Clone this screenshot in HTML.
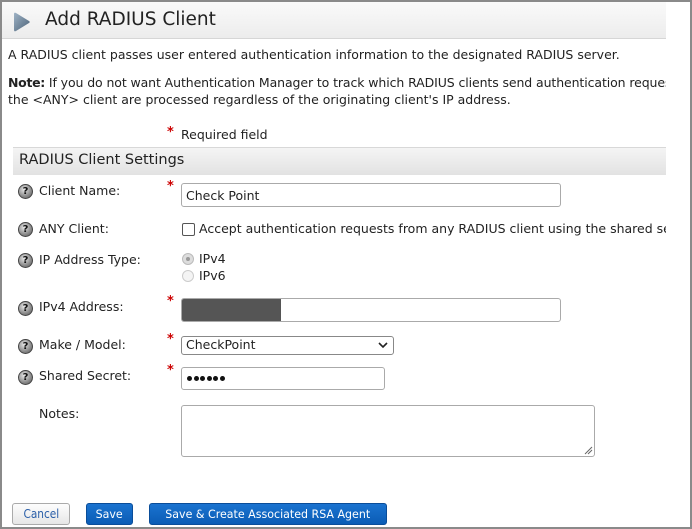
<!DOCTYPE html>
<html><head><meta charset="utf-8"><style>
body{margin:0;width:692px;height:529px;background:#fff;font-family:"DejaVu Sans","Liberation Sans",sans-serif;font-size:12.5px;color:#222;overflow:hidden}
#frame{position:absolute;left:0;top:0;width:688px;height:525px;border:2px solid #8a8a8a;overflow:hidden}
.a{position:absolute;white-space:nowrap}
#clip{position:absolute;left:0;top:0;width:664px;height:525px;overflow:hidden}
.q{position:absolute;left:16px;width:15px;height:15px;border-radius:50%;background:radial-gradient(circle at 40% 35%,#e8e8e8,#8a8a8a 60%,#555);border:1px solid #444;box-sizing:border-box;font:bold 10px "DejaVu Sans",sans-serif;color:#111;text-align:center;line-height:13px}
.st{position:absolute;left:165px;color:#c00;font-size:13px;font-weight:bold}
.inp{position:absolute;border:1px solid #aaa;border-radius:3px;box-sizing:border-box;background:#fff}
.btn{position:absolute;top:501px;height:22px;border-radius:3px;font:11.5px "DejaVu Sans",sans-serif;color:#fff;background:linear-gradient(#1a73d0,#0b5cb5);border:1px solid #0a4d99;box-sizing:border-box;text-align:center;line-height:20px;white-space:nowrap}
.btn span{display:inline-block;transform:scaleX(.96)}
.d{display:inline-block;width:5px;height:5px;border-radius:50%;background:#111;margin-right:1.5px}
</style></head><body>
<div id="frame">
<div id="clip">
<div class="a" style="left:0;top:0;width:665px;height:36px;background:linear-gradient(#fafafa,#ececec);border-bottom:1px solid #d6d6d6"></div>
<svg class="a" style="left:9px;top:10px" width="20" height="20"><defs><linearGradient id="g" x1="0" y1="0" x2="1" y2="1"><stop offset="0" stop-color="#9fb3c6"/><stop offset="1" stop-color="#4c6378"/></linearGradient></defs><path d="M3 2 Q3 0 5 1 L18 9 Q19.5 10 18 11 L5 19 Q3 20 3 18 Z" fill="url(#g)"/></svg>
<div class="a" style="left:43px;top:7px;font-size:18.5px;color:#222">Add RADIUS Client</div>
<div class="a" style="left:6px;top:45px">A RADIUS client passes user entered authentication information to the designated RADIUS server.</div>
<div class="a" style="left:6px;top:73px;letter-spacing:-0.1px"><b style="letter-spacing:-0.3px">Note:</b> If you do not want Authentication Manager to track which RADIUS clients send authentication requests,</div>
<div class="a" style="left:6px;top:90px">the &lt;ANY&gt; client are processed regardless of the originating client's IP address.</div>
<div class="st" style="top:123px">*</div>
<div class="a" style="left:179px;top:125px">Required field</div>
<div class="a" style="left:11px;top:145px;width:660px;height:27px;background:linear-gradient(#f4f4f4,#e2e2e2);border-top:1px solid #d8d8d8"></div>
<div class="a" style="left:17px;top:150px;font-size:14.5px">RADIUS Client Settings</div>

<div class="q" style="top:182px">?</div><div class="a" style="left:37px;top:181px">Client Name:</div><div class="st" style="top:177px">*</div>
<div class="inp" style="left:179px;top:181px;width:380px;height:24px"></div><div class="a" style="left:184px;top:186px">Check Point</div>

<div class="q" style="top:220px">?</div><div class="a" style="left:37px;top:219px">ANY Client:</div>
<div class="inp" style="left:180px;top:221px;width:13px;height:13px;border-color:#555;border-radius:2px"></div>
<div class="a" style="left:197px;top:219px">Accept authentication requests from any RADIUS client using the shared secret</div>

<div class="q" style="top:251px">?</div><div class="a" style="left:37px;top:250px">IP Address Type:</div>
<div class="a" style="left:180px;top:251px;width:12px;height:12px;border-radius:50%;background:#ddd;border:1px solid #bbb;box-sizing:border-box"><div style="margin:3px;width:4px;height:4px;border-radius:50%;background:#999"></div></div>
<div class="a" style="left:197px;top:249px">IPv4</div>
<div class="a" style="left:180px;top:268px;width:12px;height:12px;border-radius:50%;background:#f4f4f4;border:1px solid #ccc;box-sizing:border-box"></div>
<div class="a" style="left:197px;top:266px">IPv6</div>

<div class="q" style="top:299px">?</div><div class="a" style="left:37px;top:297px">IPv4 Address:</div><div class="st" style="top:292px">*</div>
<div class="inp" style="left:179px;top:296px;width:380px;height:24px;overflow:hidden"><div style="width:99px;height:22px;background:#555"></div></div>

<div class="q" style="top:337px">?</div><div class="a" style="left:37px;top:335px">Make / Model:</div><div class="st" style="top:330px">*</div>
<div class="inp" style="left:179px;top:334px;width:213px;height:19px;border-color:#888"></div><div class="a" style="left:184px;top:335px">CheckPoint</div>
<svg class="a" style="left:376px;top:339px" width="10" height="8"><path d="M1 2 L5 6 L9 2" stroke="#222" stroke-width="1.6" fill="none"/></svg>

<div class="q" style="top:368px">?</div><div class="a" style="left:37px;top:366px">Shared Secret:</div><div class="st" style="top:361px">*</div>
<div class="inp" style="left:179px;top:365px;width:204px;height:23px"></div>
<div class="a" style="left:185px;top:374px;height:5px;display:flex;line-height:0">
<span class="d"></span><span class="d"></span><span class="d"></span><span class="d"></span><span class="d"></span><span class="d"></span>
</div>

<div class="a" style="left:37px;top:404px">Notes:</div>
<div class="inp" style="left:179px;top:403px;width:414px;height:52px"></div>
<svg class="a" style="left:582px;top:444px" width="9" height="9"><path d="M1 8 L8 1 M4 8 L8 4" stroke="#666"/></svg>

<div class="a" style="left:10px;top:501px;width:58px;height:22px;border:1px solid #aaa;border-radius:3px;box-sizing:border-box;background:linear-gradient(#fdfdfd,#e6e6e6);font:12px 'DejaVu Sans',sans-serif;color:#2a5ea8;text-align:center;line-height:20px"><span style="display:inline-block;transform:scaleX(.88)">Cancel</span></div>
<div class="btn" style="left:84px;width:47px"><span>Save</span></div>
<div class="btn" style="left:147px;width:238px"><span>Save &amp; Create Associated RSA Agent</span></div>
</div>
</div>
</body></html>
